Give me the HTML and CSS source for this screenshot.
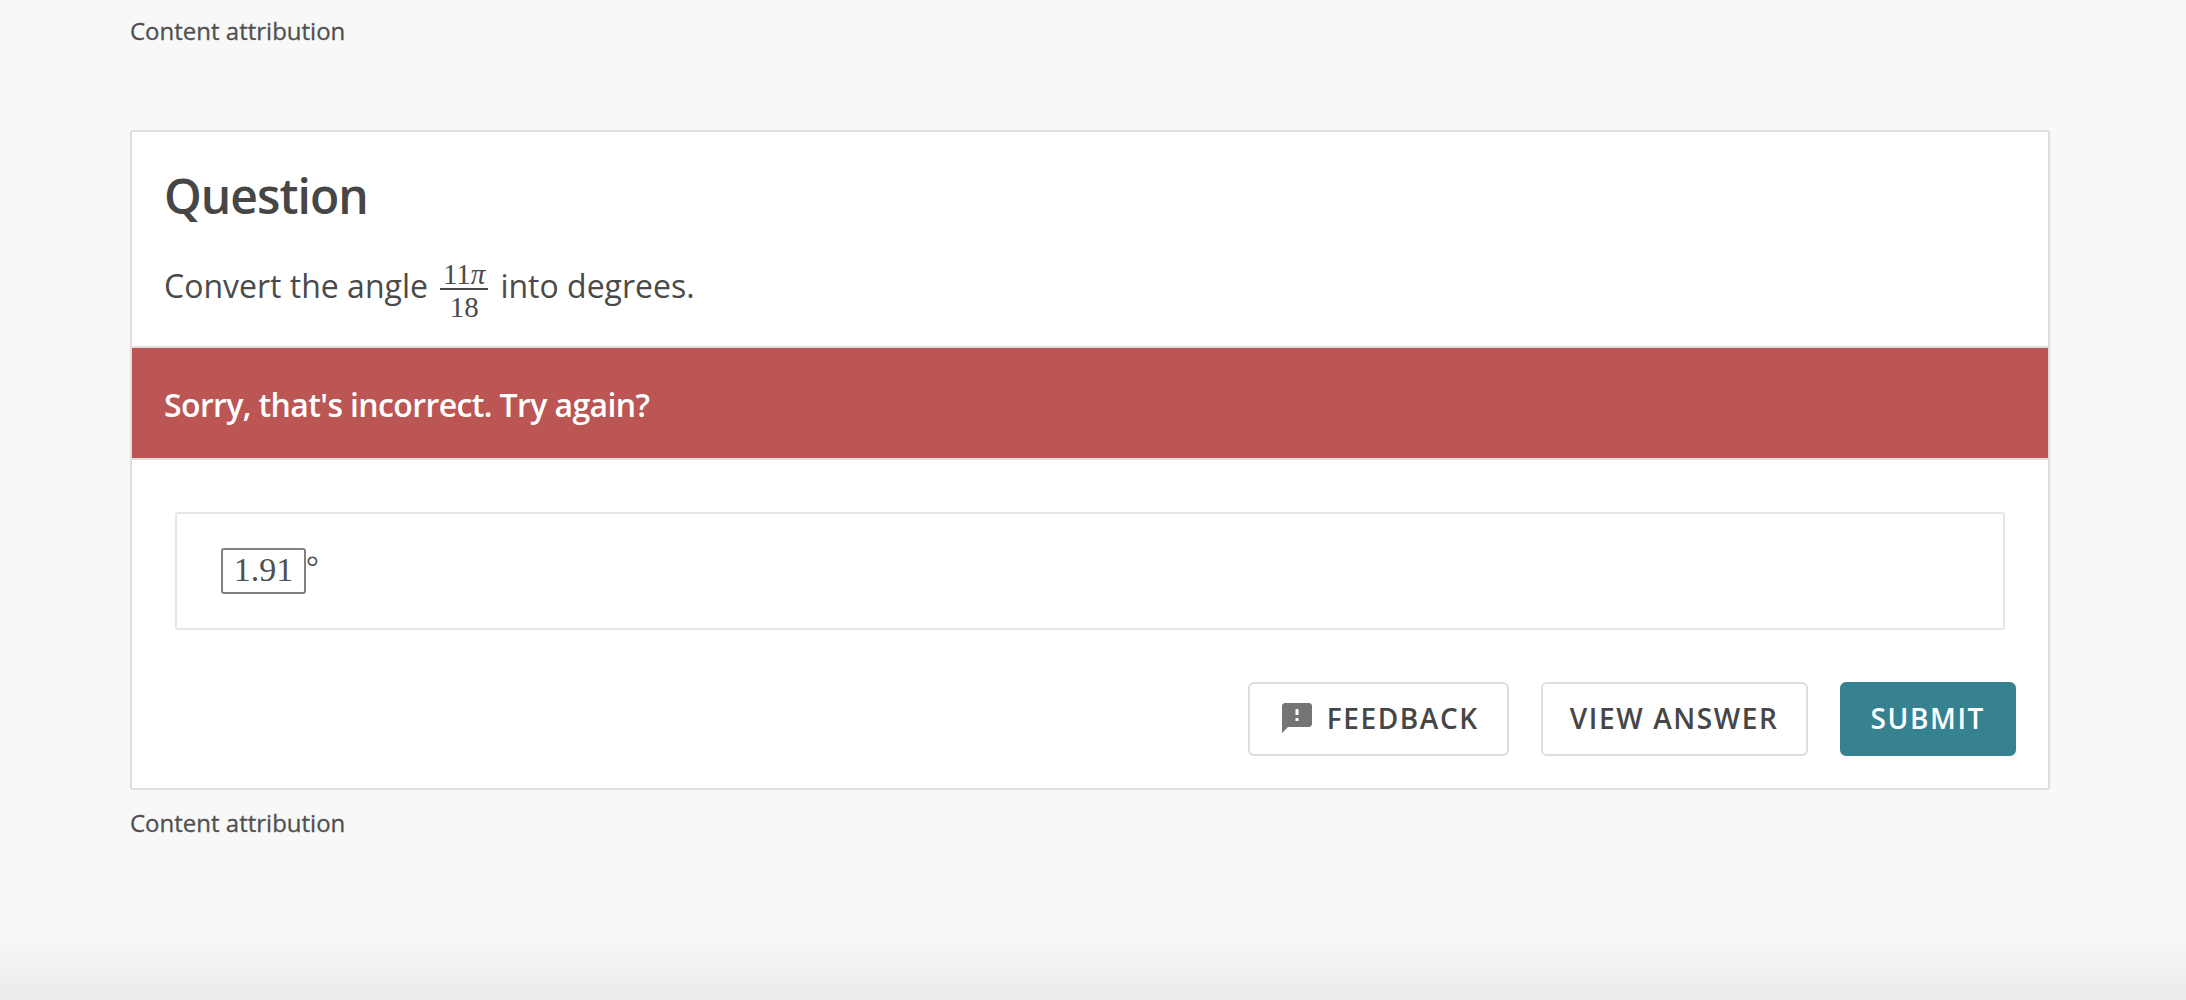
FILE: index.html
```html
<!DOCTYPE html>
<html lang="en">
<head>
  <meta charset="UTF-8" />
  <title>Question</title>
  <link rel="stylesheet" href="styles.css">
</head>
<body>

<div class="attribution top">Content attribution</div>

<main class="card">
  <section class="question">
    <h1>Question</h1>
    <p class="prompt">
      Convert the angle
      <span class="frac"><span class="num">11<i>π</i></span><span class="den">18</span></span>
      into degrees.
    </p>
  </section>

  <div class="alert">Sorry, that's incorrect. Try again?</div>

  <section class="answer">
    <div class="answer-box">
      <span class="math-input">1.91</span><span class="degree">°</span>
    </div>
  </section>

  <div class="actions">
    <button class="btn btn-feedback">
      <svg class="btn-icon" viewBox="0 0 24 24"><path d="M20 2H4c-1.1 0-1.99.9-1.99 2L2 22l4-4h14c1.1 0 2-.9 2-2V4c0-1.1-.9-2-2-2zm-7 12h-2v-2h2v2zm0-4h-2V6h2v4z"/></svg>
      FEEDBACK
    </button>
    <button class="btn btn-view">VIEW ANSWER</button>
    <button class="btn btn-primary">SUBMIT</button>
  </div>
</main>

<div class="attribution bottom">Content attribution</div>

</body>
</html>
```

FILE: styles.css
```css
html, body {
  height: 100%;
}

body {
  margin: 0;
  height: 1000px;
  overflow: hidden;
  box-sizing: border-box;
  padding: 0 136px 0 130px;
  font-family: 'Open Sans', sans-serif;
  color: #464646;
  background: linear-gradient(to bottom, #f8f8f8 0, #f8f8f8 930px, #ebebeb 1000px);
}

.attribution {
  font-size: 24px;
  line-height: 32px;
  letter-spacing: 0;
  -webkit-text-stroke: 0.3px #505050;
  color: #505050;
}

.attribution.top {
  padding-top: 15px;
  margin-bottom: 83px;
}

.attribution.bottom {
  margin-top: 17px;
}

.card {
  background-color: white;
  border: 2px solid #dedede;
  border-radius: 3px;
}

.question {
  padding: 34px 32px 0;
  height: 214px;
  box-sizing: border-box;
}

h1 {
  margin: 0;
  font-size: 48px;
  line-height: 60px;
  font-weight: 600;
  letter-spacing: -0.95px;
}

.prompt {
  margin: 28px 0 0;
  font-size: 32px;
  line-height: 40px;
  display: flex;
  align-items: center;
  gap: 12px;
  color: #4a4a4a;
}

.frac {
  display: inline-flex;
  flex-direction: column;
  align-items: center;
  margin: 6px 0 -6px;
  font-family: 'Liberation Serif', serif;
  font-size: 29px;
  line-height: 31px;
}

.num {
  border-bottom: 2px solid #4a4a4a;
  padding: 0 3px;
  line-height: 28px;
}

.den {
  padding-top: 2px;
}

.alert {
  background-color: #bb5654;
  border-top: 2px solid #dedede;
  border-bottom: 2px solid #dedede;
  color: white;
  font-size: 32px;
  font-weight: 600;
  line-height: 106px;
  padding: 4px 0 0 32px;
  letter-spacing: -0.62px;
}

.answer {
  padding: 52px 43px 0;
}

.answer-box {
  height: 118px;
  box-sizing: border-box;
  border: 2px solid #e6e6e6;
  border-radius: 3px;
  padding: 34px 0 0 44px;
  display: flex;
  align-items: flex-start;
}

.math-input {
  width: 85px;
  height: 46px;
  box-sizing: border-box;
  border: 2px solid #808080;
  border-radius: 3px;
  font-family: 'Liberation Serif', serif;
  font-size: 34px;
  line-height: 39px;
  text-align: center;
  color: #505050;
}

.degree {
  font-family: 'Liberation Serif', serif;
  font-size: 32px;
  line-height: 38px;
  color: #505050;
}

.actions {
  display: flex;
  justify-content: flex-end;
  gap: 32px;
  padding: 52px 32px 32px;
}

.btn {
  height: 74px;
  padding: 0 29px 2px;
  display: flex;
  align-items: center;
  gap: 12px;
  background-color: white;
  border: 2px solid #dedede;
  border-radius: 6px;
  color: #464646;
  font-family: 'Open Sans', sans-serif;
  font-size: 28px;
  font-weight: 600;
  letter-spacing: 1.6px;
}

.btn-feedback {
  padding: 0 28px 2px 29px;
}

.btn-view {
  padding: 0 27px 2px;
}

.btn-icon {
  width: 36px;
  height: 36px;
  fill: #757575;
}

.btn-primary {
  background-color: #368290;
  border-color: #368290;
  color: white;
}
```
